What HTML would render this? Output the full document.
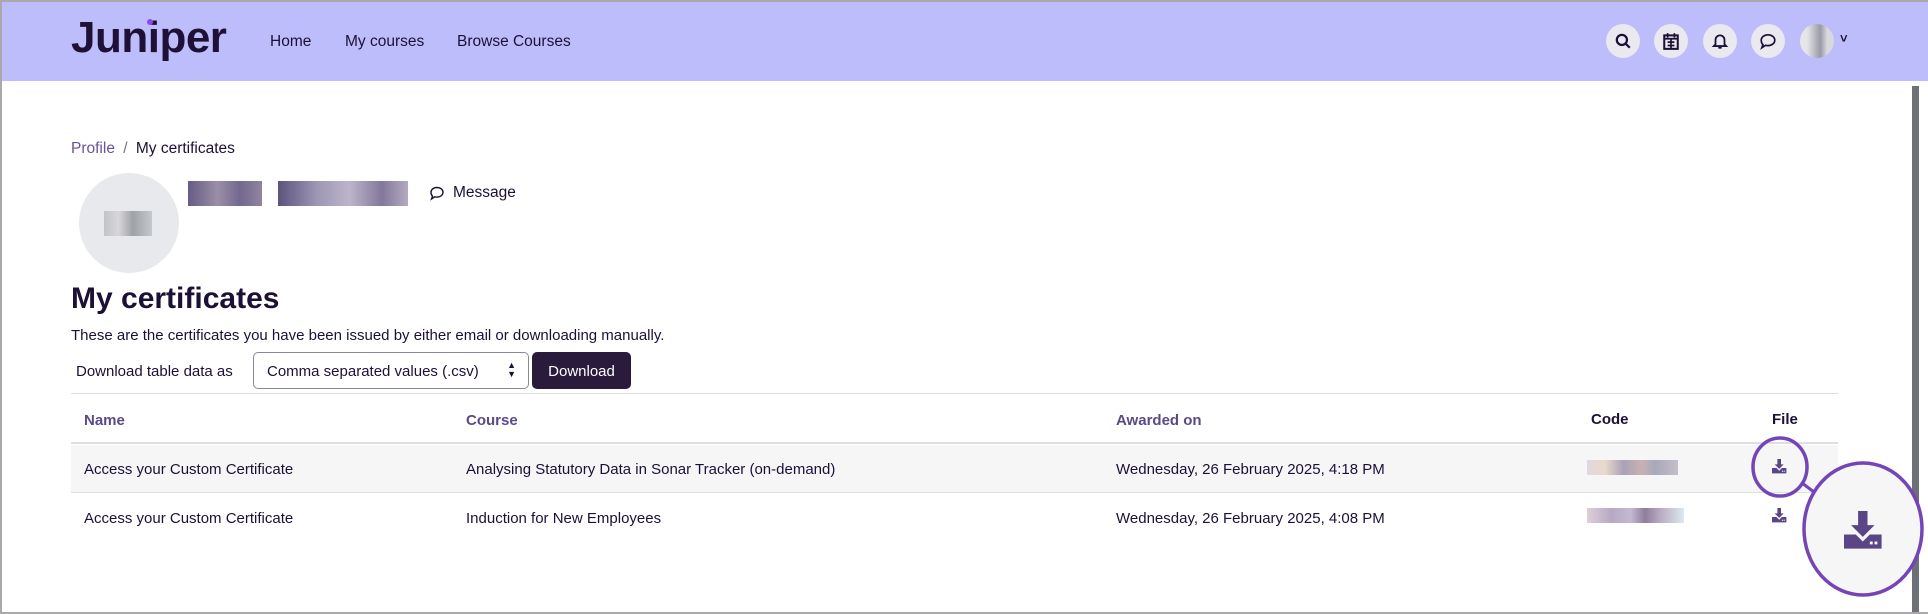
<!DOCTYPE html>
<html><head><meta charset="utf-8"><style>
*{box-sizing:border-box;margin:0;padding:0}
body{width:1928px;height:614px;overflow:hidden;background:#fff;font-family:"Liberation Sans",sans-serif;color:#1d1036;position:relative;font-size:15px}
.frame{position:absolute;left:0;top:0;width:1928px;height:614px;border:2px solid #a9a9a9;border-right:none;pointer-events:none}
.hdr{position:absolute;left:0;top:0;width:1928px;height:81px;background:#bdbdfc}
.abs{position:absolute;white-space:nowrap}
.logo{left:71px;top:13px;font-size:44px;font-weight:bold;color:#1f1036;letter-spacing:-0.5px}
.nav{top:33px;font-size:15.5px;color:#1d1036}
.ic{position:absolute;top:24px;width:34px;height:34px;border-radius:50%;background:#e9e9ef}
.ic svg{position:absolute;left:8px;top:8px}
.sb{position:absolute;left:1912px;top:86px;width:7px;height:528px;background:#6c7077}
.row{position:absolute;left:71px;width:1767px}
</style></head><body>
<div class="hdr"></div>
<div class="abs logo">Juniper</div>
<div class="abs" style="left:147px;top:19px;width:6px;height:6px;border-radius:50%;background:#8a4af0"></div>
<div class="abs nav" style="left:270px">Home</div>
<div class="abs nav" style="left:345px">My courses</div>
<div class="abs nav" style="left:457px">Browse Courses</div>
<div class="ic" style="left:1606px"><svg width="18" height="18" viewBox="0 0 16 16"><circle cx="7" cy="7" r="4.5" fill="none" stroke="#1d1036" stroke-width="2"/><path d="M10.5 10.5l3.5 3.5" stroke="#1d1036" stroke-width="2"/></svg></div>
<div class="ic" style="left:1654px"><svg width="18" height="18" viewBox="0 0 16 16"><rect x="2" y="3" width="12" height="12" fill="none" stroke="#1d1036" stroke-width="1.8"/><path d="M2 6h12M5 1v4M11 1v4M5 9h6M5 12h6M8 6v9" stroke="#1d1036" stroke-width="1.5"/></svg></div>
<div class="ic" style="left:1703px"><svg width="18" height="18" viewBox="0 0 16 16"><path d="M4 11V7a4 4 0 0 1 8 0v4l1.5 1.5h-11z M6.5 14h3" fill="none" stroke="#1d1036" stroke-width="1.6"/></svg></div>
<div class="ic" style="left:1751px"><svg width="18" height="18" viewBox="0 0 16 16"><path d="M8 2.5c3.3 0 6 2 6 4.8s-2.7 4.8-6 4.8c-.8 0-1.5-.1-2.2-.3L2.5 14l1-2.8C2.5 10.3 2 9 2 7.3 2 4.5 4.7 2.5 8 2.5z" fill="none" stroke="#1d1036" stroke-width="1.5"/></svg></div>
<div class="ic" style="left:1800px;background:linear-gradient(90deg,#e6e6ea 20%,#c0c0c8 40%,#9a9aa6 60%,#d8d8de 80%)"></div>
<div class="abs" style="left:1840px;top:31px;font-size:13px;color:#1d1036;font-weight:bold">&#709;</div>
<div class="sb"></div>

<div class="abs" style="left:71px;top:140px;font-size:15.5px"><span style="color:#6a5295">Profile</span> <span style="color:#777;margin:0 4px">/</span> My certificates</div>
<div class="abs" style="left:79px;top:173px;width:100px;height:100px;border-radius:50%;background:#e8e9ec"></div>
<div class="abs" style="left:104px;top:211px;width:48px;height:25px;background:linear-gradient(90deg,#c3c3c8,#d8d6d8 30%,#9ea3a8 60%,#c5c8cc)"></div>
<div class="abs" style="left:188px;top:181px;width:74px;height:25px;background:linear-gradient(90deg,#4b3e6e,#8a7a98 40%,#5a4e7a 70%,#7e6e90);opacity:.85"></div>
<div class="abs" style="left:278px;top:181px;width:130px;height:25px;background:linear-gradient(90deg,#3f3566,#8d84a6 30%,#b0a8c0 55%,#6e6088 80%,#a79cb6);opacity:.85"></div>
<div class="abs" style="left:429px;top:185px"><svg width="16" height="16" viewBox="0 0 16 16"><path d="M8 2.5c3.3 0 6 2 6 4.8s-2.7 4.8-6 4.8c-.8 0-1.5-.1-2.2-.3L2.5 14l1-2.8C2.5 10.3 2 9 2 7.3 2 4.5 4.7 2.5 8 2.5z" fill="none" stroke="#1d1036" stroke-width="1.4"/></svg></div>
<div class="abs" style="left:453px;top:184px;font-size:15.5px">Message</div>

<div class="abs" style="left:71px;top:282px;font-size:30px;font-weight:bold">My certificates</div>
<div class="abs" style="left:71px;top:327px;font-size:15px">These are the certificates you have been issued by either email or downloading manually.</div>
<div class="abs" style="left:76px;top:363px;font-size:15px">Download table data as</div>
<div class="abs" style="left:253px;top:352px;width:276px;height:37px;border:1px solid #8a8a96;border-radius:5px;padding:10px 13px;font-size:15px">Comma separated values (.csv)<span style="position:absolute;right:12px;top:8px;font-size:9px;line-height:9px">&#9650;<br>&#9660;</span></div>
<div class="abs" style="left:532px;top:352px;width:99px;height:37px;background:#2a1b3d;border-radius:5px;color:#fff;font-size:15px;padding:11px 0;text-align:center">Download</div>

<div class="row" style="top:393px;border-top:1px solid #dedee4;height:51px;border-bottom:2px solid #dedee4"></div>
<div class="abs" style="top:412px;left:84px;font-weight:bold;color:#5c4a86;font-size:15px">Name</div>
<div class="abs" style="top:412px;left:466px;font-weight:bold;color:#5c4a86;font-size:15px">Course</div>
<div class="abs" style="top:412px;left:1116px;font-weight:bold;color:#5c4a86;font-size:15px">Awarded on</div>
<div class="abs" style="top:411px;left:1591px;font-weight:bold;font-size:15px">Code</div>
<div class="abs" style="top:411px;left:1772px;font-weight:bold;font-size:15px">File</div>
<div class="row" style="top:445px;height:48px;background:#f6f6f7;border-bottom:1px solid #dedee4"></div>
<div class="abs" style="top:461px;left:84px">Access your Custom Certificate</div>
<div class="abs" style="top:461px;left:466px">Analysing Statutory Data in Sonar Tracker (on-demand)</div>
<div class="abs" style="top:461px;left:1116px">Wednesday, 26 February 2025, 4:18 PM</div>
<div class="abs" style="top:460px;left:1587px;width:91px;height:15px;background:linear-gradient(90deg,#e0d8e0,#ead8cc 20%,#a9a2b6 40%,#c9b1b4 60%,#a7a9bb 75%,#c6bdca)"></div>
<div class="abs" style="top:510px;left:84px">Access your Custom Certificate</div>
<div class="abs" style="top:510px;left:466px">Induction for New Employees</div>
<div class="abs" style="top:510px;left:1116px">Wednesday, 26 February 2025, 4:08 PM</div>
<div class="abs" style="top:508px;left:1587px;width:97px;height:15px;background:linear-gradient(90deg,#ddd0d8,#b7a9c3 25%,#c4b9d2 45%,#8f7e9c 60%,#b7abc0 75%,#dde8ef)"></div>

<svg class="abs" style="left:0;top:0" width="1928" height="614">
<defs><g id="dl"><path d="M6 0h4v6h3l-5 5-5-5h3z" fill="#5a4685"/><path d="M0 10h5l3 3 3-3h5v6H0z" fill="#5a4685"/><rect x="11" y="13" width="1.2" height="1.2" fill="#fff"/><rect x="13" y="13" width="1.2" height="1.2" fill="#fff"/></g></defs>
<use href="#dl" transform="translate(1772,459) scale(0.9)"/>
<use href="#dl" transform="translate(1772,508) scale(0.9)"/>
<line x1="1802" y1="483" x2="1818" y2="495" stroke="#7545b8" stroke-width="3"/>
<ellipse cx="1780" cy="467" rx="27" ry="29" fill="none" stroke="#7545b8" stroke-width="3.5"/>
<ellipse cx="1863" cy="529" rx="59" ry="66" fill="#f6f6f7" stroke="#7545b8" stroke-width="3.5"/>
<use href="#dl" transform="translate(1844,511) scale(2.35)"/>
</svg>
<div class="frame"></div>
</body></html>
